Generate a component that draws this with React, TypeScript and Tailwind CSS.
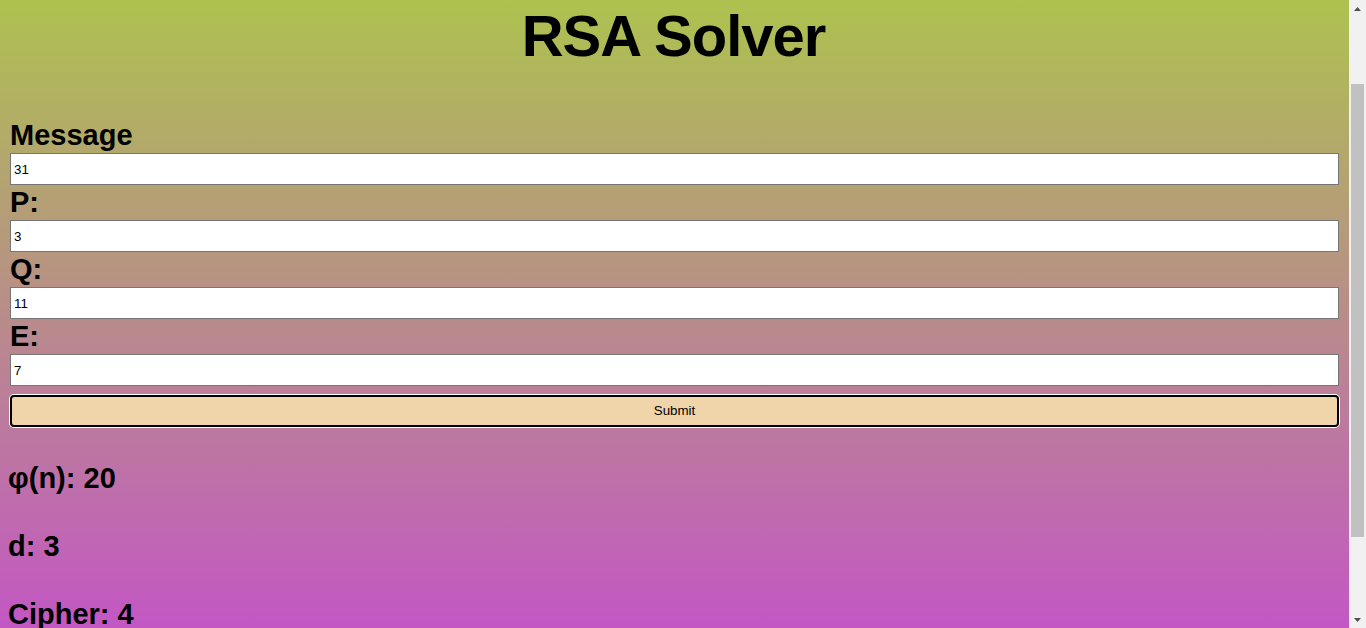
import React from 'react';

const fields = [
  { label: 'Message', value: '31' },
  { label: 'P:', value: '3' },
  { label: 'Q:', value: '11' },
  { label: 'E:', value: '7' },
];

const results = [
  { label: 'φ(n)', value: '20' },
  { label: 'd', value: '3' },
  { label: 'Cipher', value: '4' },
];

function RsaForm() {
  return (
    <form className="flex flex-col pl-[2px]" onSubmit={(e) => e.preventDefault()}>
      {fields.map((field) => (
        <div key={field.label} className="flex flex-col">
          <h2 className="text-[29px] font-bold leading-[35px] text-black">{field.label}</h2>
          <input
            type="text"
            defaultValue={field.value}
            className="h-[32px] w-full border border-[#767676] bg-white px-[3px] text-[13.333px] text-black font-['Liberation_Sans',Arial,sans-serif] outline-none"
          />
        </div>
      ))}
      <button
        type="submit"
        className="mt-[9px] h-[32px] w-full rounded-[4px] border-2 border-black bg-[#efd5a9] text-[13.333px] text-black ring-1 ring-white font-['Liberation_Sans',Arial,sans-serif]"
      >
        Submit
      </button>
    </form>
  );
}

// browser-style vertical scrollbar strip on the right edge
function ScrollStrip() {
  return (
    <div className="flex w-[17px] shrink-0 flex-col bg-[#f1f1f1]">
      <div className="flex h-[17px] items-center justify-center">
        <svg width="7" height="4" viewBox="0 0 7 4">
          <polygon points="3.5,0 7,4 0,4" fill="#505050" />
        </svg>
      </div>
      <div className="flex-1 px-[2px] pt-[67px]">
        <div className="h-[453px] bg-[#c1c1c1]" />
      </div>
      <div className="flex h-[17px] items-center justify-center">
        <svg width="7" height="4" viewBox="0 0 7 4">
          <polygon points="0,0 7,0 3.5,4" fill="#505050" />
        </svg>
      </div>
    </div>
  );
}

export default function App() {
  return (
    <div className="flex h-screen overflow-hidden">
      <div className="min-w-0 flex-1 overflow-hidden">
        <div className="bg-[linear-gradient(to_bottom,#aec24f_0px,#c357c4_628px)] pl-[8px] pr-[10px] pb-[175px] font-['Liberation_Sans',Arial,sans-serif]">
          <h1 className="mb-[46px] text-center text-[58px] font-bold leading-[72px] tracking-[-1px] text-black">
            RSA Solver
          </h1>

          <RsaForm />

          <div className="mt-[17px] flex flex-col">
            {results.map((r) => (
              <h2 key={r.label} className="text-[29px] font-bold leading-[68px] text-black">
                {r.label}: {r.value}
              </h2>
            ))}
          </div>
        </div>
      </div>
      <ScrollStrip />
    </div>
  );
}
